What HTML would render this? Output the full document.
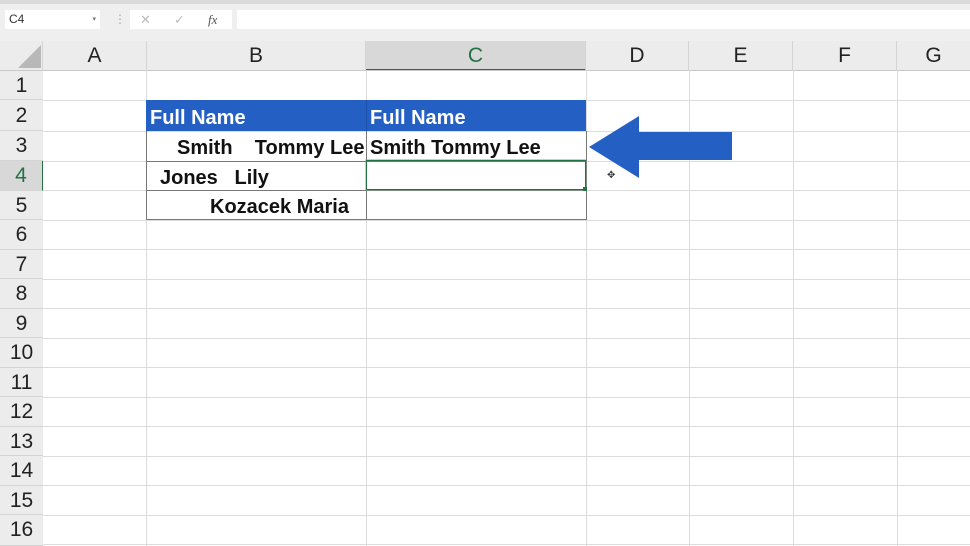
<!DOCTYPE html>
<html><head><style>
body{margin:0;width:970px;height:546px;overflow:hidden;background:#fff;font-family:"Liberation Sans",Arial,sans-serif;position:relative}
.a{position:absolute}
.hl{position:absolute;left:43px;width:927px;height:1px;background:#dcdcdc}
.vl{position:absolute;top:70px;height:476px;width:1px;background:#dcdcdc}
.rh{position:absolute;left:0;width:43px;text-align:center;font-size:21px;color:#222;background:#ececec;border-bottom:1px solid #d4d4d4;box-sizing:border-box}
.ch{position:absolute;top:41px;height:30px;line-height:30px;text-align:center;font-size:21px;color:#222;border-right:1px solid #d4d4d4;box-sizing:border-box;background:#ececec}
.c{position:absolute;font-weight:bold;font-size:20px;white-space:pre;line-height:29px}
</style></head><body>
<div class="a" style="left:0;top:0;width:970px;height:41px;background:#efefef"></div>
<div class="a" style="left:0;top:0;width:970px;height:4px;background:#dadada"></div>
<div class="a" style="left:5px;top:10px;width:95px;height:19px;background:#fff;font-size:12px;line-height:19px;color:#333;text-indent:4px">C4<span style="position:absolute;right:4px;font-size:7px;color:#777">▾</span></div>
<div class="a" style="left:114px;top:12px;color:#aaa;font-size:12px">⋮</div>
<div class="a" style="left:130px;top:10px;width:102px;height:19px;background:#fff;font-size:13px;line-height:19px;color:#bbb"><span style="position:absolute;left:10px">✕</span><span style="position:absolute;left:44px">✓</span><span style="position:absolute;left:78px;font-style:italic;font-family:'Liberation Serif',serif;color:#555">fx</span></div>
<div class="a" style="left:237px;top:10px;width:733px;height:19px;background:#fff"></div>
<div class="a" style="left:0;top:41px;width:43px;height:30px;background:#ececec;border-right:1px solid #d4d4d4;box-sizing:border-box"></div>
<svg class="a" style="left:14px;top:43px" width="28" height="26"><polygon points="27,2 27,25 4,25" fill="#b8b8b8"/></svg>
<div class="ch" style="left:43px;width:104px">A</div>
<div class="ch" style="left:147px;width:219px">B</div>
<div class="ch" style="left:366px;width:220px;background:#d8d8d8;color:#217346;border-bottom:2px solid #217346">C</div>
<div class="ch" style="left:586px;width:103px">D</div>
<div class="ch" style="left:689px;width:104px">E</div>
<div class="ch" style="left:793px;width:104px">F</div>
<div class="ch" style="left:897px;width:73px;border-right:none">G</div>
<div class="a" style="left:0;top:70px;width:970px;height:1px;background:#c8c8c8"></div>
<div class="a" style="left:42px;top:70px;width:1px;height:476px;background:#c8c8c8"></div>
<div class="rh" style="top:71px;height:29px;line-height:29px">1</div>
<div class="rh" style="top:100px;height:31px;line-height:31px">2</div>
<div class="rh" style="top:131px;height:30px;line-height:30px">3</div>
<div class="rh" style="top:161px;height:30px;line-height:30px;background:#d8d8d8;color:#217346;border-right:1px solid #217346">4</div>
<div class="rh" style="top:191px;height:29px;line-height:29px">5</div>
<div class="rh" style="top:220px;height:30px;line-height:30px">6</div>
<div class="rh" style="top:250px;height:29px;line-height:29px">7</div>
<div class="rh" style="top:279px;height:30px;line-height:30px">8</div>
<div class="rh" style="top:309px;height:29px;line-height:29px">9</div>
<div class="rh" style="top:338px;height:30px;line-height:30px">10</div>
<div class="rh" style="top:368px;height:29px;line-height:29px">11</div>
<div class="rh" style="top:397px;height:30px;line-height:30px">12</div>
<div class="rh" style="top:427px;height:29px;line-height:29px">13</div>
<div class="rh" style="top:456px;height:30px;line-height:30px">14</div>
<div class="rh" style="top:486px;height:29px;line-height:29px">15</div>
<div class="rh" style="top:515px;height:31px;line-height:30px">16</div>
<div class="hl" style="top:100px"></div><div class="hl" style="top:131px"></div><div class="hl" style="top:161px"></div><div class="hl" style="top:190px"></div><div class="hl" style="top:220px"></div><div class="hl" style="top:249px"></div><div class="hl" style="top:279px"></div><div class="hl" style="top:308px"></div><div class="hl" style="top:338px"></div><div class="hl" style="top:367px"></div><div class="hl" style="top:397px"></div><div class="hl" style="top:426px"></div><div class="hl" style="top:456px"></div><div class="hl" style="top:485px"></div><div class="hl" style="top:515px"></div><div class="hl" style="top:544px"></div>
<div class="vl" style="left:146px"></div><div class="vl" style="left:366px"></div><div class="vl" style="left:586px"></div><div class="vl" style="left:689px"></div><div class="vl" style="left:793px"></div><div class="vl" style="left:897px"></div>
<div class="a" style="left:146px;top:100px;width:440px;height:31px;background:#2460c4"></div>
<div class="a" style="left:366px;top:100px;width:1px;height:31px;background:#1a4ea8"></div>
<div class="c" style="left:150px;top:104px;color:#fff">Full Name</div>
<div class="c" style="left:370px;top:104px;color:#fff">Full Name</div>
<div class="a" style="left:146px;top:131px;width:439px;height:88px;border:1px solid #777;border-top:none;box-sizing:content-box"></div>
<div class="a" style="left:146px;top:161px;width:440px;height:1px;background:#777"></div>
<div class="a" style="left:146px;top:190px;width:440px;height:1px;background:#777"></div>
<div class="a" style="left:366px;top:131px;width:1px;height:89px;background:#777"></div>
<div class="a" style="left:366px;top:160px;width:218px;height:28px;border:1px solid #217346;box-shadow:0 0 0 0.5px #7fa88f"></div>
<div class="a" style="left:583px;top:187px;width:4px;height:4px;background:#217346"></div>
<div class="c" style="left:177px;top:134px;color:#111">Smith    Tommy Lee</div>
<div class="c" style="left:370px;top:134px;color:#111">Smith Tommy Lee</div>
<div class="c" style="left:160px;top:164px;color:#111">Jones   Lily</div>
<div class="c" style="left:210px;top:193px;color:#111">Kozacek Maria</div>
<svg class="a" style="left:585px;top:112px" width="150" height="70"><polygon points="4,35 54,4 54,20 147,20 147,48 54,48 54,66" fill="#2460c4"/></svg>
<div class="a" style="left:607px;top:170px;font-size:10px;color:#333">✥</div>
</body></html>
